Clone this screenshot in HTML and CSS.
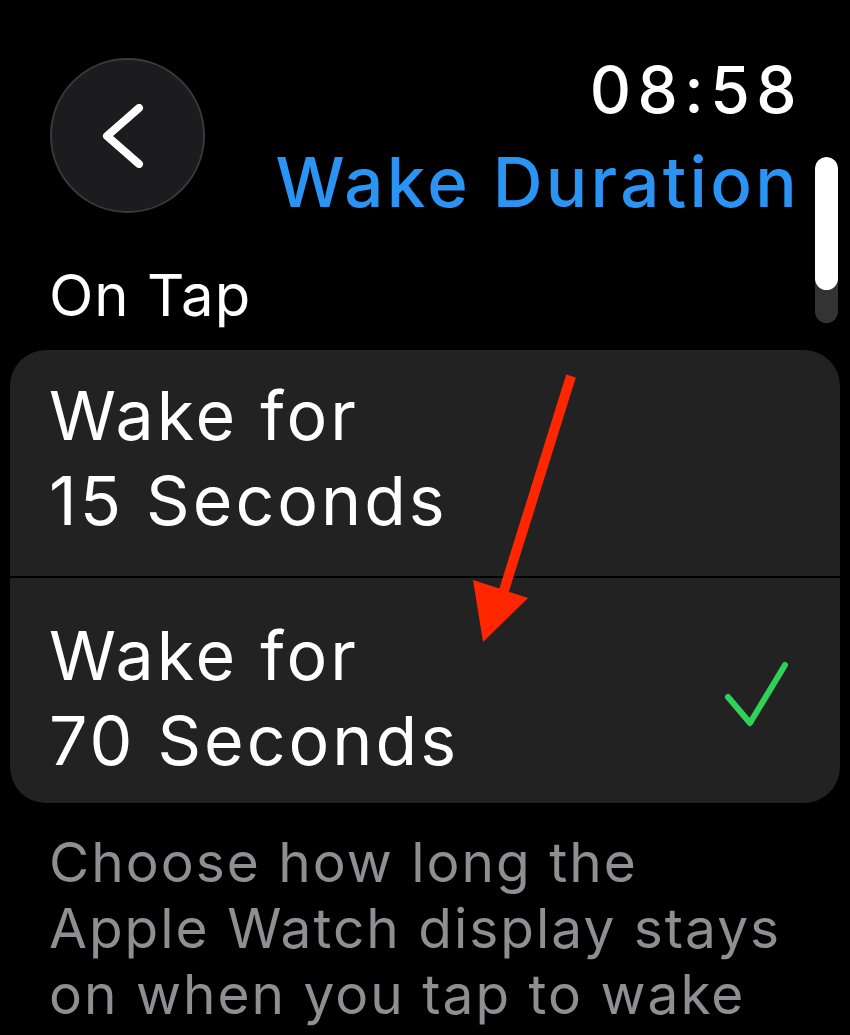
FILE: index.html
```html
<!DOCTYPE html>
<html lang="en">

<head>
    <meta charset="UTF-8">
    <title>Wake Duration</title>
    <link rel="stylesheet" href="styles.css">
</head>

<body>

    <header class="top">
        <button class="back" aria-label="Back">
            <svg width="44" height="64" viewBox="0 0 44 64">
                <path d="M38 4 L6 32 L38 60" fill="none" stroke="#fff" stroke-width="8" stroke-linecap="round" stroke-linejoin="round"/>
            </svg>
        </button>
        <div class="heading">
            <div class="time">08:58</div>
            <h1 class="title">Wake Duration</h1>
        </div>
    </header>

    <div class="scroll-indicator">
        <div class="scroll-thumb"></div>
    </div>

    <h2 class="section-label">On Tap</h2>

    <div class="card">
        <div class="row">
            <span class="row-text">Wake for<br>15 Seconds</span>
        </div>
        <div class="row selected">
            <span class="row-text">Wake for<br>70 Seconds</span>
            <svg class="check" width="66" height="68" viewBox="0 0 66 68">
                <path d="M4 36 L26 62 L61 4" fill="none" stroke="#30d158" stroke-width="6" stroke-linecap="round" stroke-linejoin="round"/>
            </svg>
        </div>

        <!-- annotation arrow -->
        <svg class="arrow" width="120" height="300" viewBox="0 0 120 300">
            <line x1="110" y1="26" x2="40" y2="250" stroke="#ff2600" stroke-width="10"/>
            <polygon points="12,230 67,248 22,292" fill="#ff2600"/>
        </svg>
    </div>

    <p class="footer-note">Choose how long the Apple Watch display stays on when you tap to wake</p>

</body>

</html>
```

FILE: styles.css
```css
* {
    margin: 0;
    padding: 0;
    box-sizing: border-box;
}

body {
    width: 850px;
    height: 1035px;
    overflow: hidden;
    position: relative;
    background: #000;
    color: #fff;
    font-family: 'Inter', 'Noto Sans', sans-serif;
}

.top {
    display: flex;
    justify-content: space-between;
    align-items: flex-start;
    padding: 58px 53px 0 50px;
}

.back {
    flex-shrink: 0;
    width: 155px;
    height: 155px;
    border-radius: 50%;
    background: #1c1c1e;
    border: 2px solid #3a3a3c;
    display: flex;
    align-items: center;
    justify-content: center;
    padding-right: 10px;
}

.heading {
    text-align: right;
}

.time {
    font-size: 64px;
    font-weight: 500;
    line-height: 64px;
    letter-spacing: 6.5px;
    margin-right: -6px;
}

.title {
    color: #2a94f4;
    font-size: 69px;
    font-weight: 500;
    line-height: 120px;
    letter-spacing: 3.3px;
    margin-right: -3px;
}

.scroll-indicator {
    position: absolute;
    left: 815px;
    top: 157px;
    width: 23px;
    height: 166px;
    border-radius: 12px;
    background: #333;
    overflow: hidden;
}

.scroll-thumb {
    height: 133px;
    background: #fff;
    border-radius: 12px;
}

.section-label {
    font-size: 58px;
    font-weight: 400;
    line-height: 70px;
    letter-spacing: 1px;
    padding: 18px 0 0 49px;
}

.card {
    position: relative;
    margin: 20px 10px 0;
    background: #222;
    border-radius: 36px;
    overflow: hidden;
}

.row {
    height: 226px;
    display: flex;
    align-items: flex-start;
    justify-content: space-between;
    padding: 23px 50px 0 39px;
}

.row + .row {
    border-top: 2px solid #000;
    height: 227px;
    padding-top: 35px;
}

.row-text {
    font-size: 68px;
    line-height: 85px;
    letter-spacing: 3px;
}

.check {
    margin-top: 48px;
}

.arrow {
    position: absolute;
    left: 451px;
    top: 0;
}

.footer-note {
    color: #8e8e93;
    font-size: 55px;
    line-height: 66px;
    letter-spacing: 2px;
    padding: 26px 61px 0 49px;
}
```
